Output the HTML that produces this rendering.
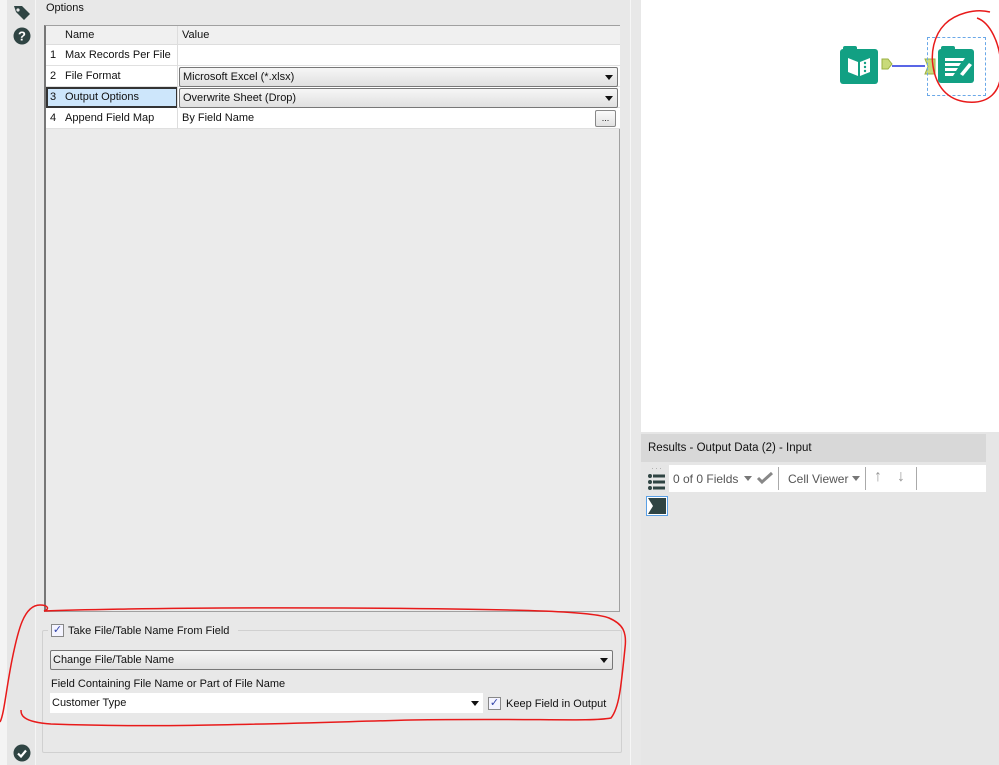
<!DOCTYPE html>
<html><head><meta charset="utf-8"><style>
*{box-sizing:border-box;margin:0;padding:0}
body{width:999px;height:765px;position:relative;overflow:hidden;background:#e8e8e8;font-family:"Liberation Sans",sans-serif;font-size:11px;color:#111}
.abs{position:absolute}
.strip{left:0;top:0;width:7px;height:765px;background:#f4f4f4}
.side{left:7px;top:0;width:29px;height:765px;background:#e6e6e6;border-right:1px solid #f5f5f5}
.grid{left:44px;top:25px;width:576px;height:587px;background:#ebebeb;border:1px solid #a0a0a0;border-left:2px solid #777}
.row{position:absolute;left:0;width:574px;height:21px;background:#fff;border-bottom:1px solid #e0e0e0}
.row span{position:absolute;top:4px}
.dd{position:absolute;background:linear-gradient(#f6f6f6,#e0e0e0);border:1px solid #777;border-radius:2px}
.tri{position:absolute;width:0;height:0;border-left:4px solid transparent;border-right:4px solid transparent;border-top:5px solid #111}
.cb{position:absolute;width:13px;height:13px;border:1px solid #888;background:#f4f4ff;color:#3344aa;font-size:11px;line-height:11px;text-align:center}
</style></head><body>
<div class="abs strip"></div>
<div class="abs side"></div>
<svg class="abs" style="left:12px;top:4px" width="20" height="20" viewBox="0 0 20 20"><path d="M2 2h8l8 8-6 6-8-8z" fill="#2f4443"/><circle cx="6" cy="6" r="1.6" fill="#e6e6e6"/></svg>
<svg class="abs" style="left:13px;top:27px" width="18" height="18" viewBox="0 0 18 18"><circle cx="9" cy="9" r="8.5" fill="#2f4443"/><text x="9" y="13.5" font-size="13" font-weight="bold" fill="#fff" text-anchor="middle" font-family="Liberation Sans">?</text></svg>
<svg class="abs" style="left:13px;top:744px" width="18" height="18" viewBox="0 0 18 18"><circle cx="9" cy="9" r="8.5" fill="#2f4443"/><path d="M5 9.5l3 3 5-6" stroke="#fff" stroke-width="2.2" fill="none"/></svg>

<div class="abs" style="left:46px;top:2px">Options</div>
<div class="abs grid">
  <div class="row" style="top:0;height:19px;background:#f0f0f0;border-bottom:1px solid #ddd"><span style="left:19px;top:3px">Name</span><span style="left:136px;top:3px">Value</span><div class="abs" style="left:131px;top:0;width:1px;height:19px;background:#ddd"></div></div>
  <div class="row" style="top:19px"><span style="left:4px">1</span><span style="left:19px">Max Records Per File</span></div>
  <div class="row" style="top:40px"><span style="left:4px">2</span><span style="left:19px">File Format</span></div>
  <div class="row" style="top:61px"><span style="left:4px">3</span></div>
  <div class="abs" style="left:0;top:61px;width:132px;height:21px;background:#cde6fb;border:2px solid #333"><span class="abs" style="left:2px;top:2px">3</span><span class="abs" style="left:17px;top:2px">Output Options</span></div>
  <div class="row" style="top:82px"><span style="left:4px">4</span><span style="left:19px">Append Field Map</span><span style="left:136px">By Field Name</span></div>
  <div class="abs" style="left:131px;top:19px;width:1px;height:84px;background:#ddd"></div>
  <div class="dd" style="left:133px;top:41px;width:439px;height:20px"><span class="abs" style="left:3px;top:3px">Microsoft Excel (*.xlsx)</span><div class="tri" style="right:4px;top:7px"></div></div>
  <div class="dd" style="left:133px;top:62px;width:439px;height:20px"><span class="abs" style="left:3px;top:3px">Overwrite Sheet (Drop)</span><div class="tri" style="right:4px;top:7px"></div></div>
  <div class="abs" style="left:549px;top:84px;width:21px;height:17px;border:1px solid #888;border-radius:2px;background:linear-gradient(#fafafa,#e2e2e2);font-size:9px;text-align:center;line-height:14px">...</div>
</div>

<div class="abs" style="left:42px;top:630px;width:580px;height:123px;border:1px solid #d0d0d0;border-radius:2px"></div>
<div class="abs" style="left:48px;top:622px;width:190px;height:16px;background:#e8e8e8"></div>
<div class="cb" style="left:51px;top:624px">✓</div>
<div class="abs" style="left:68px;top:625px">Take File/Table Name From Field</div>
<div class="dd" style="left:50px;top:650px;width:563px;height:20px"><span class="abs" style="left:2px;top:3px">Change File/Table Name</span><div class="tri" style="right:4px;top:7px"></div></div>
<div class="abs" style="left:51px;top:678px">Field Containing File Name or Part of File Name</div>
<div class="abs" style="left:50px;top:693px;width:433px;height:20px;background:#fff"><span class="abs" style="left:2px;top:4px">Customer Type</span><div class="tri" style="right:4px;top:8px"></div></div>
<div class="cb" style="left:488px;top:697px">✓</div>
<div class="abs" style="left:506px;top:698px">Keep Field in Output</div>

<div class="abs" style="left:630px;top:0;width:10px;height:765px;background:#e8e8e8;border-left:1px solid #f6f6f6"></div>
<div class="abs" style="left:641px;top:0;width:358px;height:432px;background:#fff"></div>
<div class="abs" style="left:641px;top:432px;width:358px;height:333px;background:#e6e6e6"></div>
<div class="abs" style="left:641px;top:434px;width:345px;height:28px;background:#d8d8d8"></div>
<div class="abs" style="left:648px;top:442px;font-size:11.5px">Results - Output Data (2) - Input</div>
<div class="abs" style="left:669px;top:465px;width:317px;height:27px;background:#fff"></div>
<div class="abs" style="left:673px;top:472px;color:#555;font-size:12px">0 of 0 Fields</div>
<div class="tri" style="left:744px;top:476px;border-top-color:#777"></div>
<svg class="abs" style="left:756px;top:471px" width="18" height="14"><path d="M2 7l4 4 10-9" stroke="#888" stroke-width="3" fill="none"/></svg>
<div class="abs" style="left:778px;top:467px;width:1px;height:23px;background:#aaa"></div>
<div class="abs" style="left:788px;top:472px;color:#555;font-size:12px">Cell Viewer</div>
<div class="tri" style="left:852px;top:476px;border-top-color:#777"></div>
<div class="abs" style="left:865px;top:467px;width:1px;height:23px;background:#aaa"></div>
<div class="abs" style="left:874px;top:468px;color:#999;font-size:16px;font-weight:bold">↑</div>
<div class="abs" style="left:897px;top:468px;color:#999;font-size:16px;font-weight:bold">↓</div>
<div class="abs" style="left:916px;top:467px;width:1px;height:23px;background:#aaa"></div>
<div class="abs" style="left:651px;top:463px;color:#aaa;font-size:9px;letter-spacing:1px">···</div>
<svg class="abs" style="left:648px;top:474px" width="18" height="16"><g fill="#2f4443"><circle cx="2" cy="2" r="2"/><rect x="5" y="0.5" width="12" height="3"/><circle cx="2" cy="8" r="2"/><rect x="5" y="6.5" width="12" height="3"/><circle cx="2" cy="14" r="2"/><rect x="5" y="12.5" width="12" height="3"/></g></svg>
<div class="abs" style="left:646px;top:496px;width:22px;height:20px;border:1px solid #5aa0e6;background:#fff;padding:1px"><svg width="18" height="16"><path d="M0 0h18v16H0l5-8z" fill="#2f4443"/></svg></div>

<svg class="abs" style="left:840px;top:46px" width="40" height="38"><rect x="0" y="3" width="38" height="35" rx="3" fill="#12a083"/><rect x="3" y="0" width="14" height="6" rx="2" fill="#12a083"/><path d="M8 12l10 4v14l-10-4zM30 12l-10 4v14l10-4z" fill="#fff"/><g fill="#12a083"><circle cx="25" cy="17" r="1.2"/><circle cx="25" cy="21" r="1.2"/><circle cx="25" cy="25" r="1.2"/></g></svg>
<svg class="abs" style="left:881px;top:56px" width="56" height="22"><path d="M1 3h6l4 5-4 5H1z" fill="#c8da7a" stroke="#9ab040"/><line x1="11" y1="10" x2="44" y2="10" stroke="#2233dd" stroke-width="1.5"/><path d="M44 3h10v15H44l3-7.5z" fill="#c8da7a" stroke="#9ab040"/></svg>
<div class="abs" style="left:927px;top:37px;width:59px;height:59px;border:1px dashed #6aa8e8"></div>
<svg class="abs" style="left:938px;top:46px" width="38" height="38"><rect x="0" y="3" width="36" height="34" rx="3" fill="#12a083"/><rect x="3" y="0" width="14" height="6" rx="2" fill="#12a083"/><path d="M7 12h20l-2 3H7zM7 17h16l-2 3H7zM7 22h13l-2 3H7zM7 27h10l-2 3H7zM22 28l9-11 3 2-9 11z" fill="#fff"/></svg>

<svg class="abs" style="left:0;top:0" width="999" height="765">
<path d="M0 722C4 715 6 690 12 660c6-30 12-55 28-55 8 0 10 4 4 6 0 0 100-4 300-3 200 1 250 4 265 10 14 6 18 14 16 30-4 40-6 60-14 70-20 4-80 0-200 2-150 4-250 8-360 4-30-2-30-10-30-14" stroke="#e81a1a" stroke-width="1.5" fill="none"/>
<path d="M990 12C975 8 955 14 945 24c-12 12-14 30-12 42 3 20 14 34 34 36 22 2 34-10 34-32 0-28-12-48-24-52" stroke="#e81a1a" stroke-width="1.5" fill="none"/>
</svg>
</body></html>
